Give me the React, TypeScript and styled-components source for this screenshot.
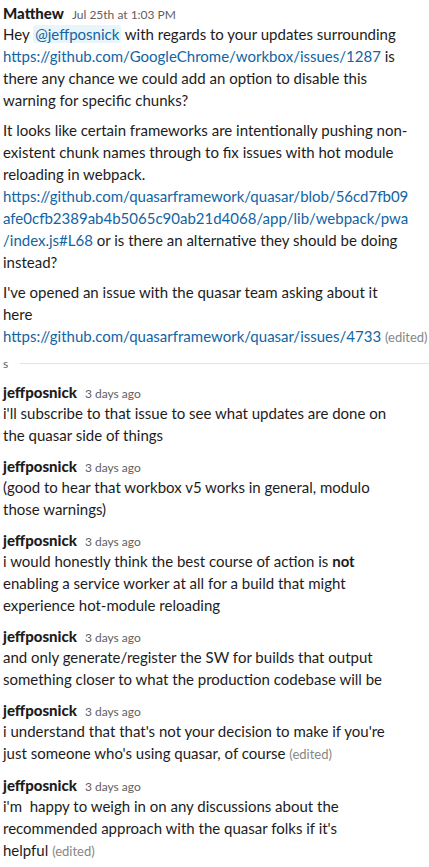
import React from 'react'
import styled, { createGlobalStyle } from 'styled-components'

const GlobalStyle = createGlobalStyle`
  html, body {
    margin: 0;
    padding: 0;
    background: #ffffff;
  }
  body {
    font-family: Lato, "Noto Sans", sans-serif;
    color: #1d1c1d;
    -webkit-font-smoothing: antialiased;
  }
`

const Feed = styled.div`
  width: 405px;
  padding: 3px 0 0 3px;
  display: flex;
  flex-direction: column;
`

const MessageBlock = styled.div<{ $gap: number }>`
  display: flex;
  flex-direction: column;
  margin-bottom: ${p => p.$gap}px;
`

const Header = styled.div`
  display: flex;
  align-items: baseline;
  gap: 8px;
  height: 20px;
  line-height: 20px;
`

const Name = styled.span`
  font-weight: 900;
  font-size: 15px;
  color: #1d1c1d;
`

const Time = styled.span`
  font-size: 12px;
  color: #616061;
`

const Para = styled.p`
  margin: 0;
  font-size: 15px;
  line-height: 22px;
  white-space: pre-wrap;

  & + & {
    margin-top: 8px;
  }
`

const Link = styled.a`
  color: #1264a3;
  text-decoration: none;
`

const Mention = styled.span`
  color: #1264a3;
  background: rgba(29, 155, 209, 0.1);
  border-radius: 3px;
  padding: 0 2px;
`

const Edited = styled.span`
  font-size: 13px;
  color: #868686;
`

const NoWrap = styled.span`
  white-space: nowrap;
`

const Divider = styled.div`
  display: flex;
  align-items: center;
  gap: 12px;
  height: 10px;
  margin: 10px 0 14px -3px;
  width: 429px;
  padding-left: 3px;
  box-sizing: border-box;
  font-size: 12px;
  color: #616061;

  &::after {
    content: '';
    flex: 1;
    height: 1px;
    background: #e2e2e2;
  }
`

const Strong = styled.b`
  font-weight: 700;
`

type Msg = {
  name: string
  time: string
  paras: React.ReactNode[]
}

const later: Msg[] = [
  { name: 'jeffposnick', time: '3 days ago', paras: ["i'll subscribe to that issue to see what updates are done on the quasar side of things"] },
  { name: 'jeffposnick', time: '3 days ago', paras: ['(good to hear that workbox v5 works in general, modulo those warnings)'] },
  {
    name: 'jeffposnick',
    time: '3 days ago',
    paras: [<>i would honestly think the best course of action is <Strong>not</Strong> enabling a service worker at all for a build that might experience hot-module reloading</>],
  },
  { name: 'jeffposnick', time: '3 days ago', paras: ['and only generate/register the SW for builds that output something closer to what the production codebase will be'] },
  {
    name: 'jeffposnick',
    time: '3 days ago',
    paras: [<>i understand that that's not your decision to make if you're just someone who's using quasar, of course <Edited>(edited)</Edited></>],
  },
  {
    name: 'jeffposnick',
    time: '3 days ago',
    paras: [<>i'm  happy to weigh in on any discussions about the recommended approach with the quasar folks if it's <NoWrap>helpful <Edited>(edited)</Edited></NoWrap></>],
  },
]

function Message({ msg, gap }: { msg: Msg; gap: number }) {
  return (
    <MessageBlock $gap={gap}>
      <Header>
        <Name>{msg.name}</Name>
        <Time>{msg.time}</Time>
      </Header>
      {msg.paras.map((p, i) => <Para key={i}>{p}</Para>)}
    </MessageBlock>
  )
}

export default function App() {
  const first: Msg = {
    name: 'Matthew',
    time: 'Jul 25th at 1:03 PM',
    paras: [
      <>Hey <Mention>@jeffposnick</Mention> with regards to your updates surrounding <Link>https://github.com/GoogleChrome/workbox/issues/1287</Link> is there any chance we could add an option to disable this warning for specific chunks?</>,
      <>It looks like certain frameworks are intentionally pushing non-existent chunk names through to fix issues with hot module reloading in webpack. <Link>https://github.com/quasarframework/quasar/blob/56cd7fb09<wbr />afe0cfb2389ab4b5065c90ab21d4068/app/lib/webpack/pwa<wbr />/index.js#L68</Link> or is there an alternative they should be doing instead?</>,
      <>I've opened an issue with the quasar team asking about it <NoWrap>here</NoWrap>{'\n'}<NoWrap><Link>https://github.com/quasarframework/quasar/issues/4733</Link> <Edited>(edited)</Edited></NoWrap></>,
    ],
  }

  return (
    <>
      <GlobalStyle />
      <Feed>
        <Message msg={first} gap={0} />
        <Divider>s</Divider>
        {later.map((m, i) => <Message key={i} msg={m} gap={10} />)}
      </Feed>
    </>
  )
}
